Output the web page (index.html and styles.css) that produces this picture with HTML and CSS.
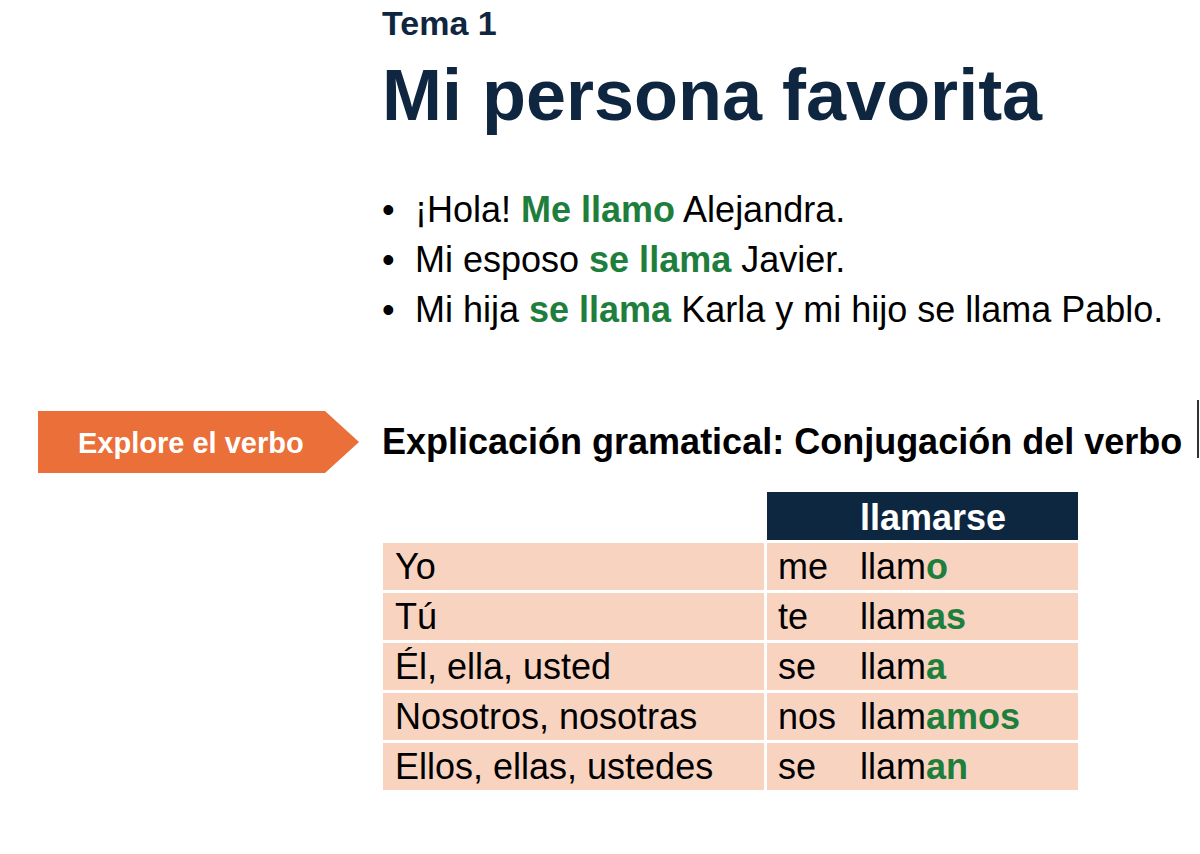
FILE: index.html
```html
<!DOCTYPE html>
<html lang="es">
<head>
<meta charset="utf-8">
<title>Mi persona favorita</title>
<link rel="stylesheet" href="styles.css">
</head>
<body>
<div class="page">
  <header class="intro">
    <div class="tema">Tema 1</div>
    <h1 class="title">Mi persona favorita</h1>
    <ul class="bullets">
      <li>¡Hola! <b class="g">Me llamo</b> Alejandra.</li>
      <li>Mi esposo <b class="g">se llama</b> Javier.</li>
      <li>Mi hija <b class="g">se llama</b> Karla y mi hijo se llama Pablo.</li>
    </ul>
  </header>

  <section class="explore-row">
    <div class="arrow">Explore el verbo</div>
    <h2 class="heading">Explicación gramatical: Conjugación del verbo</h2>
    <div class="edge-box"></div>
  </section>

  <div class="conj">
    <div class="blank"></div>
    <div class="head"><span class="pro"></span>llamarse</div>

    <div class="cell">Yo</div>
    <div class="cell"><span class="pro">me</span>llam<b class="g">o</b></div>

    <div class="cell">Tú</div>
    <div class="cell"><span class="pro">te</span>llam<b class="g">as</b></div>

    <div class="cell">Él, ella, usted</div>
    <div class="cell"><span class="pro">se</span>llam<b class="g">a</b></div>

    <div class="cell">Nosotros, nosotras</div>
    <div class="cell"><span class="pro">nos</span>llam<b class="g">amos</b></div>

    <div class="cell">Ellos, ellas, ustedes</div>
    <div class="cell"><span class="pro">se</span>llam<b class="g">an</b></div>
  </div>
</div>
</body>
</html>
```

FILE: styles.css
```css
* { box-sizing: border-box; }

html, body {
  margin: 0;
  padding: 0;
  background: #ffffff;
  overflow: hidden;
}

body {
  font-family: "Liberation Sans", Arial, sans-serif;
  color: #000;
  width: 1200px;
  height: 854px;
}

.page {
  display: flex;
  flex-direction: column;
}

.intro {
  padding-left: 382px;
  padding-top: 3px;
}

.tema {
  font-size: 34px;
  line-height: 40px;
  font-weight: 700;
  color: #0f2640;
}

.title {
  margin: 12px 0 0;
  font-size: 72px;
  line-height: 80px;
  font-weight: 700;
  color: #0f2640;
}

.bullets {
  list-style: none;
  margin: 50px 0 0;
  padding: 0;
}

.bullets li {
  font-size: 36px;
  line-height: 50px;
  display: flex;
  white-space: pre;
}

.bullets li::before {
  content: "•";
  width: 33px;
  flex-shrink: 0;
}

.g {
  color: #1e7e3c;
  font-weight: 700;
}

.explore-row {
  display: flex;
  align-items: center;
  margin-top: 76px;
  padding-left: 38px;
  white-space: nowrap;
}

.arrow {
  flex-shrink: 0;
  width: 321px;
  height: 62px;
  background: #ea6f38;
  color: #fff;
  font-size: 29px;
  font-weight: 700;
  line-height: 64px;
  padding-left: 40px;
  clip-path: polygon(0 0, calc(100% - 34px) 0, 100% 50%, calc(100% - 34px) 100%, 0 100%);
}

.heading {
  flex-shrink: 0;
  margin: 0 0 0 23px;
  font-size: 36px;
  line-height: 44px;
  font-weight: 700;
  color: #000;
}

.edge-box {
  flex-shrink: 0;
  align-self: flex-start;
  margin-top: -11px;
  margin-left: 15px;
  width: 30px;
  height: 58px;
  border-left: 2px solid #333;
}

.conj {
  display: grid;
  grid-template-columns: 381px 311px;
  grid-template-rows: 48px repeat(5, 47px);
  gap: 3px;
  margin: 19px 0 0 383px;
  font-size: 36px;
}

.blank { background: transparent; }

.head {
  background: #0e2741;
  color: #fff;
  font-weight: 700;
  line-height: 52px;
  padding-left: 11px;
  white-space: nowrap;
}

.cell {
  background: #f8d3c0;
  line-height: 48px;
  padding-left: 12px;
  white-space: nowrap;
}

.cell:nth-child(even) { padding-left: 11px; }

.pro {
  display: inline-block;
  width: 82px;
}
```
